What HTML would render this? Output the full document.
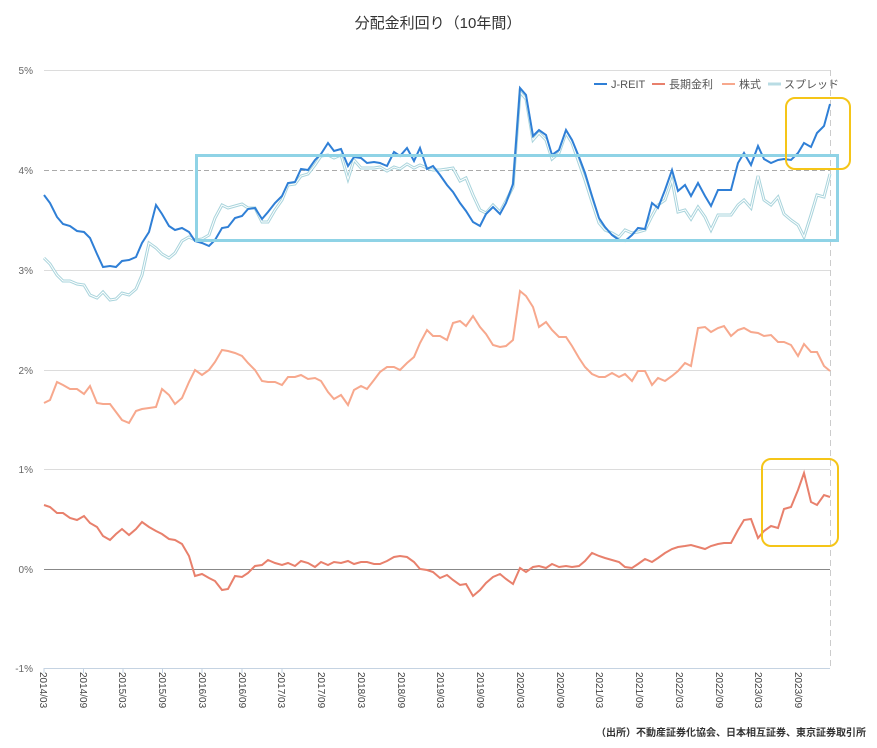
<!DOCTYPE html>
<html><head><meta charset="utf-8"><style>
body{margin:0;background:#fff;width:877px;height:743px;overflow:hidden;font-family:"Liberation Sans","Noto Sans CJK JP",sans-serif}
</style></head><body>
<svg width="877" height="743" viewBox="0 0 877 743" xmlns="http://www.w3.org/2000/svg" font-family="Liberation Sans, Noto Sans CJK JP, sans-serif">
<text x="438" y="28" text-anchor="middle" font-size="15" fill="#333">分配金利回り（10年間）</text>
<g stroke="#dcdcdc" stroke-width="1">
<line x1="44" y1="70.5" x2="830" y2="70.5"/>
<line x1="44" y1="270.5" x2="830" y2="270.5"/>
<line x1="44" y1="370.5" x2="830" y2="370.5"/>
<line x1="44" y1="469.5" x2="830" y2="469.5"/>
</g>
<line x1="44" y1="170.5" x2="830" y2="170.5" stroke="#aaa" stroke-dasharray="5,3"/>
<line x1="44" y1="569.5" x2="830" y2="569.5" stroke="#888"/>
<line x1="44" y1="668.5" x2="830" y2="668.5" stroke="#c5d3e2"/>
<line x1="830.5" y1="70" x2="830.5" y2="668" stroke="#ccc" stroke-dasharray="6,4"/>
<g font-size="10" fill="#666" text-anchor="end">
<text x="33" y="74">5%</text><text x="33" y="174">4%</text><text x="33" y="274">3%</text><text x="33" y="374">2%</text><text x="33" y="473">1%</text><text x="33" y="573">0%</text><text x="33" y="672">-1%</text>
</g>
<g font-size="10" fill="#555" id="xl"></g>
<polyline fill="none" stroke="#a9d4dc" stroke-width="3" points="44,258 50,264 57,275 63,281 70,281 77,284 84,285 90,295 97,298 103,292 110,300 116,299 122,293 129,295 136,289 142,275 149,243 156,248 162,254 169,258 175,253 182,241 189,237 195,240 202,239 209,235 215,218 222,205 228,208 235,206 242,204 248,208 255,208 262,222 268,222 275,210 282,200 288,185 295,184 301,176 308,174 315,165 321,156 328,155 334,158 341,155 348,179 354,160 361,168 367,168 374,168 380,167 387,171 394,167 400,169 407,164 414,168 420,165 427,168 433,170 440,170 447,169 453,168 460,181 466,178 473,195 480,210 486,213 493,205 500,212 506,201 513,187 520,92 526,99 533,140 539,133 546,140 552,159 559,153 566,133 572,143 579,163 585,180 592,202 599,223 605,230 612,233 619,237 625,230 632,233 638,232 645,230 652,216 658,205 665,200 672,180 678,212 685,210 691,219 698,207 705,217 711,230 718,215 724,215 731,215 738,205 744,200 751,208 758,176 764,200 771,205 778,197 784,214 791,220 798,225 804,237 811,215 817,195 824,197 830,174"/>
<polyline fill="none" stroke="#fff" stroke-width="1" points="44,258 50,264 57,275 63,281 70,281 77,284 84,285 90,295 97,298 103,292 110,300 116,299 122,293 129,295 136,289 142,275 149,243 156,248 162,254 169,258 175,253 182,241 189,237 195,240 202,239 209,235 215,218 222,205 228,208 235,206 242,204 248,208 255,208 262,222 268,222 275,210 282,200 288,185 295,184 301,176 308,174 315,165 321,156 328,155 334,158 341,155 348,179 354,160 361,168 367,168 374,168 380,167 387,171 394,167 400,169 407,164 414,168 420,165 427,168 433,170 440,170 447,169 453,168 460,181 466,178 473,195 480,210 486,213 493,205 500,212 506,201 513,187 520,92 526,99 533,140 539,133 546,140 552,159 559,153 566,133 572,143 579,163 585,180 592,202 599,223 605,230 612,233 619,237 625,230 632,233 638,232 645,230 652,216 658,205 665,200 672,180 678,212 685,210 691,219 698,207 705,217 711,230 718,215 724,215 731,215 738,205 744,200 751,208 758,176 764,200 771,205 778,197 784,214 791,220 798,225 804,237 811,215 817,195 824,197 830,174"/>
<polyline fill="none" stroke="#2f7fd6" stroke-width="2" points="44,195 50,203 57,217 63,224 70,226 77,231 84,232 90,238 97,254 103,267 110,266 116,267 122,261 129,260 136,257 142,243 149,232 156,205 162,214 169,226 175,230 182,228 189,232 195,241 202,243 209,246 215,240 222,228 228,227 235,218 242,216 248,209 255,208 262,219 268,212 275,203 282,196 288,183 295,182 301,169 308,170 315,160 321,154 328,143 334,151 341,149 348,166 354,157 361,158 367,163 374,162 380,163 387,166 394,152 400,156 407,148 414,161 420,148 427,169 433,166 440,175 447,185 453,192 460,203 466,211 473,222 480,226 486,214 493,207 500,214 506,203 513,184 520,88 526,95 533,136 539,130 546,135 552,155 559,150 566,130 572,140 579,157 585,173 592,196 599,218 605,227 612,235 619,240 625,241 632,235 638,228 645,229 652,203 658,208 665,190 672,170 678,191 685,185 691,196 698,183 705,196 711,206 718,190 724,190 731,190 738,163 744,153 751,165 758,146 764,159 771,163 778,160 784,159 791,160 798,153 804,143 811,147 817,133 824,126 830,104"/>
<polyline fill="none" stroke="#f7a88d" stroke-width="2" points="44,403 50,400 57,382 63,385 70,389 77,389 84,394 90,386 97,403 103,404 110,404 116,412 122,420 129,423 136,411 142,409 149,408 156,407 162,389 169,395 175,404 182,398 189,382 195,370 202,375 209,370 215,362 222,350 228,351 235,353 242,356 248,363 255,370 262,381 268,382 275,382 282,385 288,377 295,377 301,375 308,379 315,378 321,381 328,392 334,399 341,395 348,405 354,390 361,386 367,389 374,380 380,372 387,367 394,367 400,370 407,363 414,357 420,343 427,330 433,336 440,336 447,340 453,323 460,321 466,326 473,316 480,327 486,334 493,345 500,347 506,346 513,340 520,291 526,296 533,307 539,327 546,322 552,330 559,337 566,337 572,346 579,358 585,367 592,374 599,377 605,377 612,373 619,377 625,374 632,381 638,371 645,371 652,385 658,378 665,381 672,376 678,371 685,363 691,366 698,328 705,327 711,332 718,328 724,326 731,336 738,330 744,328 751,332 758,333 764,336 771,335 778,342 784,342 791,345 798,356 804,344 811,352 817,352 824,366 830,371"/>
<polyline fill="none" stroke="#e8806c" stroke-width="2" points="44,505 50,507 57,513 63,513 70,518 77,520 84,516 90,523 97,527 103,536 110,540 116,534 122,529 129,535 136,529 142,522 149,527 156,531 162,534 169,539 175,540 182,544 189,556 195,576 202,574 209,578 215,581 222,590 228,589 235,576 242,577 248,573 255,566 262,565 268,560 275,563 282,565 288,563 295,566 301,561 308,563 315,567 321,562 328,565 334,562 341,563 348,561 354,564 361,562 367,562 374,564 380,564 387,561 394,557 400,556 407,557 414,562 420,569 427,570 433,572 440,578 447,575 453,580 460,585 466,584 473,596 480,590 486,583 493,577 500,574 506,579 513,584 520,568 526,572 533,567 539,566 546,568 552,564 559,567 566,566 572,567 579,566 585,561 592,553 599,556 605,558 612,560 619,562 625,567 632,568 638,564 645,559 652,562 658,558 665,553 672,549 678,547 685,546 691,545 698,547 705,549 711,546 718,544 724,543 731,543 738,530 744,520 751,519 758,538 764,531 771,526 778,528 784,509 791,507 798,490 804,473 811,502 817,505 824,495 830,497"/>
<rect x="196.5" y="155.5" width="641" height="85" fill="none" stroke="#8fd3e6" stroke-width="3"/>
<rect x="786" y="98" width="64" height="71" rx="9" fill="none" stroke="#f5c518" stroke-width="2"/>
<rect x="762" y="459" width="76" height="87" rx="9" fill="none" stroke="#f5c518" stroke-width="2"/>
<g font-size="11" fill="#555">
<line x1="594" y1="84" x2="607" y2="84" stroke="#2f7fd6" stroke-width="2"/><text x="611" y="88">J-REIT</text>
<line x1="652" y1="84" x2="665" y2="84" stroke="#e8806c" stroke-width="2"/><text x="669" y="88">長期金利</text>
<line x1="722" y1="84" x2="735" y2="84" stroke="#f7a88d" stroke-width="2"/><text x="739" y="88">株式</text>
<line x1="768" y1="84" x2="781" y2="84" stroke="#b9dce4" stroke-width="3"/><text x="784" y="88">スプレッド</text>
</g>
<g font-size="10" fill="#444">
<text transform="translate(40,672) rotate(90)">2014/03</text>
<text transform="translate(80,672) rotate(90)">2014/09</text>
<text transform="translate(119,672) rotate(90)">2015/03</text>
<text transform="translate(159,672) rotate(90)">2015/09</text>
<text transform="translate(199,672) rotate(90)">2016/03</text>
<text transform="translate(239,672) rotate(90)">2016/09</text>
<text transform="translate(278,672) rotate(90)">2017/03</text>
<text transform="translate(318,672) rotate(90)">2017/09</text>
<text transform="translate(358,672) rotate(90)">2018/03</text>
<text transform="translate(398,672) rotate(90)">2018/09</text>
<text transform="translate(437,672) rotate(90)">2019/03</text>
<text transform="translate(477,672) rotate(90)">2019/09</text>
<text transform="translate(517,672) rotate(90)">2020/03</text>
<text transform="translate(557,672) rotate(90)">2020/09</text>
<text transform="translate(596,672) rotate(90)">2021/03</text>
<text transform="translate(636,672) rotate(90)">2021/09</text>
<text transform="translate(676,672) rotate(90)">2022/03</text>
<text transform="translate(716,672) rotate(90)">2022/09</text>
<text transform="translate(755,672) rotate(90)">2023/03</text>
<text transform="translate(795,672) rotate(90)">2023/09</text>
</g>
<g stroke="#c5d3e2"><line x1="44" y1="668" x2="44" y2="673"/><line x1="83.5" y1="668" x2="83.5" y2="673"/><line x1="123" y1="668" x2="123" y2="673"/><line x1="162.5" y1="668" x2="162.5" y2="673"/><line x1="202" y1="668" x2="202" y2="673"/><line x1="242" y1="668" x2="242" y2="673"/><line x1="282" y1="668" x2="282" y2="673"/></g>
<text x="866" y="736" text-anchor="end" font-size="10" font-weight="bold" fill="#333">（出所）不動産証券化協会、日本相互証券、東京証券取引所</text>
</svg>
</body></html>
